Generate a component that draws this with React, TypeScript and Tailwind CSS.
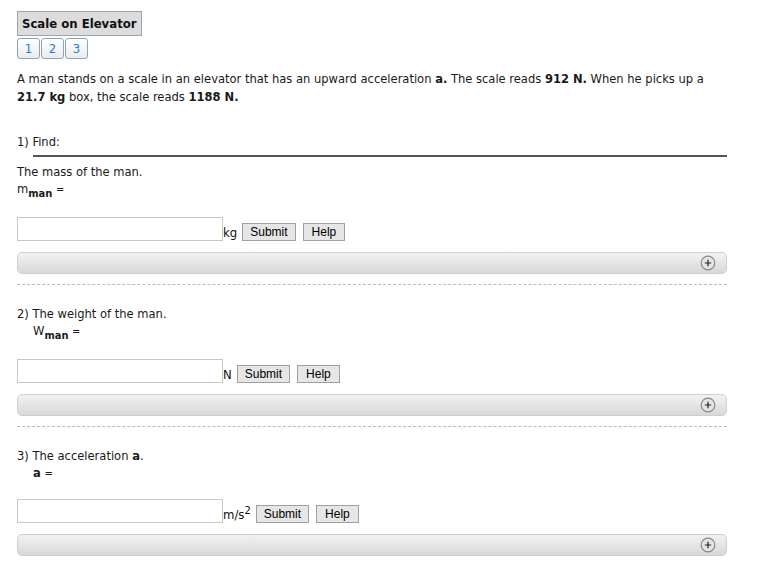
import React from 'react'

const body = { fontFamily: '"DejaVu Sans Condensed", "DejaVu Sans", sans-serif' }
const btnFont = { fontFamily: '"Liberation Sans", Arial, sans-serif' }

function PlusCircle() {
  return (
    <svg width="16" height="16" viewBox="0 0 16 16">
      <circle cx="8" cy="8" r="6.8" fill="#e4e4e4" stroke="#8a8a8a" strokeWidth="1.2" />
      <path d="M4.8 8h6.4M8 4.8v6.4" stroke="#222" strokeWidth="1.2" />
    </svg>
  )
}

function AnswerRow({ unit }: { unit: React.ReactNode }) {
  return (
    <div className="flex items-end">
      <input
        type="text"
        className="w-[206px] h-[24px] border border-[#c8c8c8] bg-white outline-none"
      />
      <span className="text-[13px] text-[#111] leading-[15px] mb-[1px]">{unit}</span>
      <button
        className="ml-[5px] h-[18px] px-[7px] border border-[#a0a0a0] bg-[#e6e6e6] text-[12px] leading-[14px] text-black"
        style={btnFont}
      >
        Submit
      </button>
      <button
        className="ml-[7px] h-[18px] px-[8px] border border-[#a0a0a0] bg-[#e6e6e6] text-[12px] leading-[14px] text-black"
        style={btnFont}
      >
        Help
      </button>
    </div>
  )
}

function HintBar() {
  return (
    <div className="mt-[11px] h-[22px] rounded-[5px] border border-[#cfcfcf] bg-gradient-to-b from-[#f2f2f2] to-[#d8d8d8] flex items-center justify-end pr-[10px]">
      <PlusCircle />
    </div>
  )
}

function Sub({ children }: { children: React.ReactNode }) {
  return <span className="relative top-[4px] font-bold text-[11px] leading-none">{children}</span>
}

export default function App() {
  return (
    <div className="bg-white min-h-screen pl-[17px] pr-[36px] pt-[11px] text-[12.8px] text-[#1a1a1a]" style={body}>
      <div className="inline-block bg-[#dcdcdc] border border-[#9aa4ae] px-[4px] h-[25px] leading-[23px] text-[13px] font-bold text-[#111]">
        Scale on Elevator
      </div>
      <div className="flex mt-[2px]">
        {['1', '2', '3'].map((n) => (
          <div
            key={n}
            className="w-[23px] h-[21px] mr-[1px] rounded-[3px] border border-[#8fa2b6] bg-gradient-to-b from-white to-[#e8ecf0] text-[#2a7ad0] text-[13px] leading-[19px] text-center"
          >
            {n}
          </div>
        ))}
      </div>

      <p className="mt-[11px] leading-[18px]">
        A man stands on a scale in an elevator that has an upward acceleration <b>a.</b> The scale reads <b>912 N.</b> When he picks up a{' '}
        <b>21.7 kg</b> box, the scale reads <b>1188 N.</b>
      </p>

      <div className="mt-[27px] leading-[18px]">1) Find:</div>
      <div className="ml-[16px] mt-[4px] border-t-2 border-[#555]" />

      <div className="mt-[6px] leading-[18px]">The mass of the man.</div>
      <div className="leading-[16px] h-[16px]">
        m<Sub>man</Sub> <span className="text-[11px]">=</span>
      </div>
      <div className="mt-[20px]">
        <AnswerRow unit="kg" />
      </div>
      <HintBar />
      <div className="mt-[10px] border-t border-dashed border-[#bbb]" />

      <div className="mt-[20px] leading-[18px]">2) The weight of the man.</div>
      <div className="ml-[16px] leading-[16px] h-[16px]">
        W<Sub>man</Sub> <span className="text-[11px]">=</span>
      </div>
      <div className="mt-[20px]">
        <AnswerRow unit="N" />
      </div>
      <HintBar />
      <div className="mt-[10px] border-t border-dashed border-[#bbb]" />

      <div className="mt-[20px] leading-[18px]">3) The acceleration <b>a</b>.</div>
      <div className="ml-[16px] leading-[16px] h-[16px]">
        <b>a</b> <span className="text-[11px]">=</span>
      </div>
      <div className="mt-[18px]">
        <AnswerRow
          unit={
            <>
              m/s<sup className="text-[11px]">2</sup>
            </>
          }
        />
      </div>
      <HintBar />
    </div>
  )
}
